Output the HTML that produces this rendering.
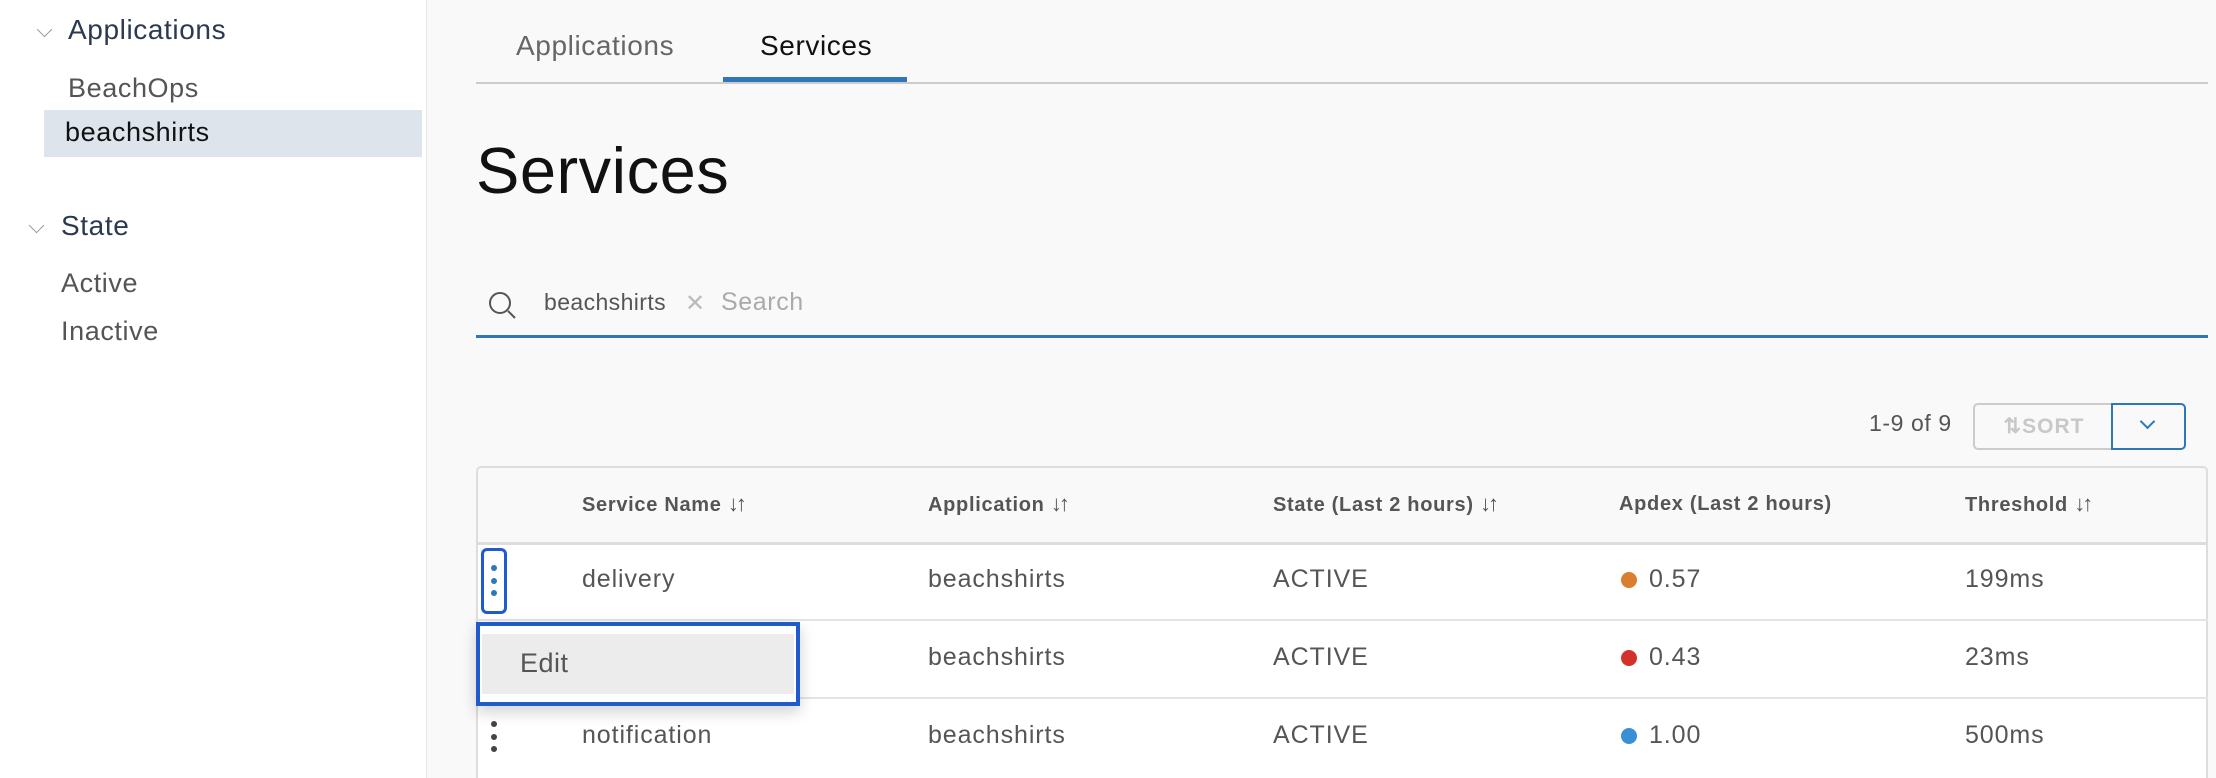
<!DOCTYPE html>
<html><head><meta charset="utf-8"><style>
*{box-sizing:border-box;margin:0;padding:0}
html,body{width:2216px;height:778px;overflow:hidden}
body{background:#f9f9f9;font-family:"Liberation Sans",sans-serif;position:relative;color:#333}
.a{position:absolute;white-space:nowrap}
#side{position:absolute;left:0;top:0;width:427px;height:778px;background:#fff;border-right:1px solid #e8e8e8}
.sh{font-size:28px;color:#2b3a4f;letter-spacing:.6px}
.si{font-size:27px;color:#555;letter-spacing:.6px}
.chev{width:11px;height:11px;border-right:1.5px solid #999;border-bottom:1.5px solid #999;transform:rotate(45deg)}
.th{font-size:20px;font-weight:bold;color:#555;letter-spacing:.7px;top:491px}
.ar{font-weight:normal;letter-spacing:-3px;font-size:22px}
.td{font-size:25px;color:#555;letter-spacing:.9px}
.hl{position:absolute;left:477px;width:1731px;height:2px;background:#e4e4e4}
.dot{width:16px;height:16px;border-radius:50%}
</style></head><body>
<div id="side">
<div class="a chev" style="left:39px;top:24px"></div>
<div class="a sh" style="left:68px;top:14px">Applications</div>
<div class="a si" style="left:68px;top:73px">BeachOps</div>
<div class="a" style="left:44px;top:110px;width:378px;height:47px;background:#dde4ec"></div>
<div class="a si" style="left:65px;top:117px;color:#111">beachshirts</div>
<div class="a chev" style="left:31px;top:220px"></div>
<div class="a sh" style="left:61px;top:210px">State</div>
<div class="a si" style="left:61px;top:268px">Active</div>
<div class="a si" style="left:61px;top:316px">Inactive</div>
</div>

<div class="a" style="left:516px;top:30px;font-size:28px;color:#666;letter-spacing:.6px">Applications</div>
<div class="a" style="left:760px;top:30px;font-size:28px;color:#111;letter-spacing:.6px">Services</div>
<div class="a" style="left:476px;top:82px;width:1732px;height:2px;background:#ccc"></div>
<div class="a" style="left:723px;top:77px;width:184px;height:5px;background:#2f78b8"></div>

<div class="a" style="left:476px;top:133px;font-size:65px;color:#111;letter-spacing:.5px">Services</div>

<svg class="a" style="left:487px;top:290px" width="32" height="32" viewBox="0 0 32 32"><circle cx="13" cy="13" r="10" fill="none" stroke="#555" stroke-width="2"/><path d="M21 21l7 7" stroke="#555" stroke-width="2"/></svg>
<div class="a" style="left:544px;top:289px;font-size:23px;color:#555;letter-spacing:.4px">beachshirts</div>
<div class="a" style="left:685px;top:289px;font-size:24px;color:#bbb">✕</div>
<div class="a" style="left:721px;top:288px;font-size:25px;color:#aaa;letter-spacing:.6px">Search</div>
<div class="a" style="left:476px;top:335px;width:1732px;height:3px;background:#2f78b8"></div>

<div class="a" style="left:1869px;top:410px;font-size:23px;color:#555;letter-spacing:.6px">1-9 of 9</div>
<div class="a" style="left:1973px;top:403px;width:140px;height:47px;border:2px solid #ccc;border-right:none;border-radius:5px 0 0 5px;font-size:21px;font-weight:bold;color:#c8c8c8;text-align:center;line-height:43px;letter-spacing:1px">⇅SORT</div>
<div class="a" style="left:2111px;top:403px;width:75px;height:47px;border:2px solid #2f78b8;border-radius:0 5px 5px 0"></div>
<div class="a" style="left:2142px;top:416px;width:11px;height:11px;border-right:2px solid #2f78b8;border-bottom:2px solid #2f78b8;transform:rotate(45deg)"></div>

<div class="a" style="left:476px;top:466px;width:1732px;height:340px;border:2px solid #ddd;border-radius:5px;background:#fff"></div>
<div class="a" style="left:478px;top:468px;width:1728px;height:75px;background:#f9f9f9;border-radius:4px 4px 0 0"></div>
<div class="hl" style="top:542px;height:3px;background:#ddd"></div>
<div class="hl" style="top:619px"></div>
<div class="hl" style="top:697px"></div>

<div class="a th" style="left:582px">Service Name <span class="ar">↓↑</span></div>
<div class="a th" style="left:928px">Application <span class="ar">↓↑</span></div>
<div class="a th" style="left:1273px">State (Last 2 hours) <span class="ar">↓↑</span></div>
<div class="a th" style="left:1619px;top:493px">Apdex (Last 2 hours)</div>
<div class="a th" style="left:1965px">Threshold <span class="ar">↓↑</span></div>

<div class="a" style="left:481px;top:548px;width:26px;height:66px;border:3px solid #1f5bcc;border-radius:6px"></div>
<div class="a dot" style="left:491px;top:565px;width:6px;height:6px;background:#2f78b8"></div>
<div class="a dot" style="left:491px;top:578px;width:6px;height:6px;background:#2f78b8"></div>
<div class="a dot" style="left:491px;top:590px;width:6px;height:6px;background:#2f78b8"></div>
<div class="a dot" style="left:491px;top:721px;width:6px;height:6px;background:#444"></div>
<div class="a dot" style="left:491px;top:734px;width:6px;height:6px;background:#444"></div>
<div class="a dot" style="left:491px;top:746px;width:6px;height:6px;background:#444"></div>

<div class="a td" style="left:582px;top:565px">delivery</div>
<div class="a td" style="left:582px;top:721px">notification</div>
<div class="a td" style="left:928px;top:565px">beachshirts</div>
<div class="a td" style="left:928px;top:643px">beachshirts</div>
<div class="a td" style="left:928px;top:721px">beachshirts</div>
<div class="a td" style="left:1273px;top:565px">ACTIVE</div>
<div class="a td" style="left:1273px;top:643px">ACTIVE</div>
<div class="a td" style="left:1273px;top:721px">ACTIVE</div>
<div class="a dot" style="left:1621px;top:572px;background:#d97f2f"></div>
<div class="a dot" style="left:1621px;top:650px;background:#d3322a"></div>
<div class="a dot" style="left:1621px;top:728px;background:#3b8fd4"></div>
<div class="a td" style="left:1649px;top:565px">0.57</div>
<div class="a td" style="left:1649px;top:643px">0.43</div>
<div class="a td" style="left:1649px;top:721px">1.00</div>
<div class="a td" style="left:1965px;top:565px">199ms</div>
<div class="a td" style="left:1965px;top:643px">23ms</div>
<div class="a td" style="left:1965px;top:721px">500ms</div>

<div class="a" style="left:476px;top:622px;width:324px;height:84px;border:4px solid #1f5bcc;background:#fff;box-shadow:0 6px 14px rgba(0,0,0,.18)"></div>
<div class="a" style="left:482px;top:634px;width:312px;height:60px;background:#ececec"></div>
<div class="a" style="left:520px;top:648px;font-size:27px;color:#555;letter-spacing:.5px">Edit</div>
</body></html>
